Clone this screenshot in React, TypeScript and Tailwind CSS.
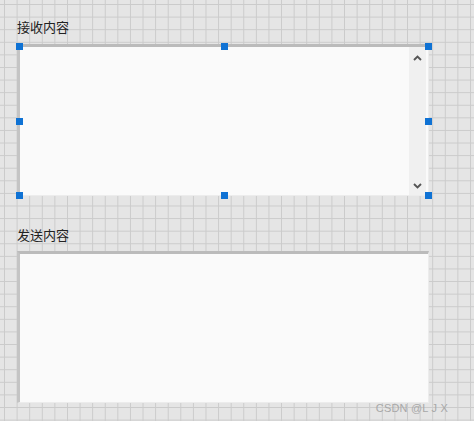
import React from 'react';

const font = { fontFamily: '"Noto Sans CJK SC", "Noto Sans", sans-serif' };

function Handle() {
  return <div className="w-[7px] h-[7px] bg-[#0f72d4]" />;
}

function Chevron({ up }: { up?: boolean }) {
  return (
    <svg width="9" height="6" viewBox="0 0 9 6" className="text-[#555]">
      <polyline
        points={up ? '1,5 4.5,1.5 8,5' : '1,1 4.5,4.5 8,1'}
        fill="none"
        stroke="currentColor"
        strokeWidth="1.9"
      />
    </svg>
  );
}

function Field({ children }: { children?: React.ReactNode }) {
  return (
    <div className="relative w-[412px] h-[152px] flex border-t-[3px] border-l-[3px] border-r border-b border-t-[#bbbbbb] border-l-[#c4c4c4] border-r-[#ececec] border-b-[#ececec] bg-[#fafafa]">
      {children}
    </div>
  );
}

// selection handles drawn over the selected control
function Selection() {
  return (
    <div className="absolute inset-[-1px] right-[-3px] bottom-[-3px] flex flex-col justify-between pointer-events-none">
      <div className="flex justify-between">
        <Handle />
        <Handle />
        <Handle />
      </div>
      <div className="flex justify-between">
        <Handle />
        <Handle />
      </div>
      <div className="flex justify-between">
        <Handle />
        <Handle />
        <Handle />
      </div>
    </div>
  );
}

export default function App() {
  return (
    <div
      className="relative w-[474px] h-[421px] overflow-hidden bg-[#e5e5e5] bg-[linear-gradient(to_right,#cbcbcb_1px,transparent_1px),linear-gradient(to_bottom,#cbcbcb_1px,transparent_1px)] bg-[size:12.6px_12.6px] bg-[position:4px_4px] flex flex-col pl-[17px] pt-[19px]"
      style={font}
    >
      <div className="text-[13px] leading-[16px] text-[#222]">接收内容</div>
      <div className="mt-[9px] relative w-[412px]">
        <Field>
          <div className="flex-1" />
          <div className="w-[17px] mr-[2px] bg-[#f0f0f0] flex flex-col items-center justify-between pt-[8px] pb-[6px]">
            <Chevron up />
            <Chevron />
          </div>
        </Field>
        <Selection />
      </div>
      <div className="mt-[31px] text-[13px] leading-[16px] text-[#222]">发送内容</div>
      <div className="mt-[8px]">
        <Field />
      </div>
      <div
        className="absolute right-[26px] bottom-[6px] text-[11px] leading-[14px] tracking-[0.2px] text-[#a8a8a8]"
        style={{ fontFamily: '"Liberation Sans", Arial, sans-serif' }}
      >
        CSDN @L J X
      </div>
    </div>
  );
}
